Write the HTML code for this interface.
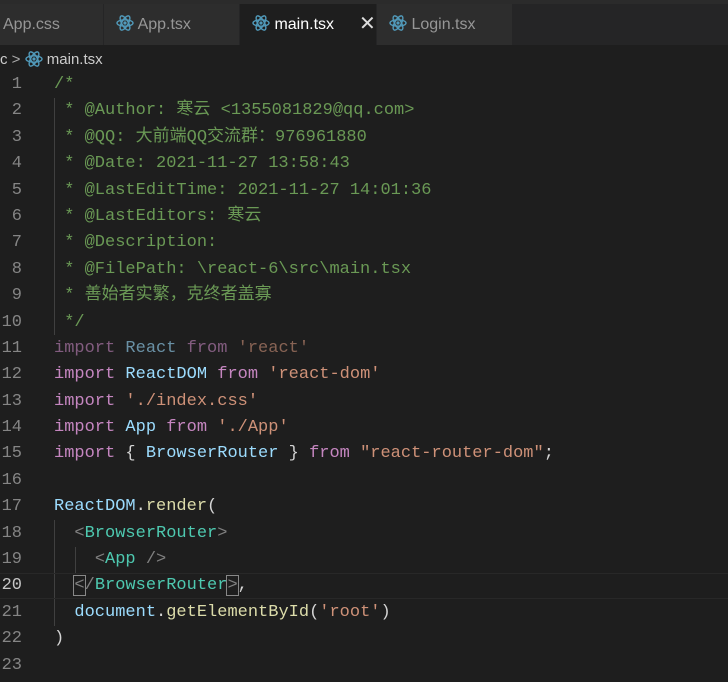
<!DOCTYPE html>
<html><head><meta charset="utf-8"><style>
body{margin:0;width:728px;height:682px;background:#1e1e1e;overflow:hidden;font-family:"Liberation Sans","Noto Sans CJK SC",sans-serif;position:relative}
.top{position:absolute;left:0;top:0;width:728px;height:4px;background:#2b2b2b}
.tabs{position:absolute;left:0;top:4px;width:728px;height:41px;background:#252526}
.tab{position:absolute;top:0;height:41px;background:#2d2d2d;color:#969696;font-size:16px;line-height:41px;border-right:1px solid #252526;box-sizing:border-box}
.tab.act{background:#1e1e1e;color:#fff}
.ic{display:inline-block;vertical-align:middle;margin-top:-3px}
.bc{position:absolute;top:47px;left:0;height:25px;line-height:25px;color:#cccccc;font-size:15px}
.code{position:absolute;top:72px;left:0;font-family:"Liberation Mono","Noto Sans CJK SC",monospace;font-size:17px}
.l{height:26.4px;line-height:26.4px;white-space:pre;position:relative}
.n{display:inline-block;width:22px;text-align:right;color:#858585;margin-right:32px}
.c{color:#6a9955}.k{color:#c586c0}.v{color:#9cdcfe}.s{color:#ce9178}.f{color:#dcdcaa}.t{color:#4ec9b0}.p{color:#808080}.w{color:#d4d4d4}
.g{position:absolute;width:1px;background:#404040}
</style></head><body>
<svg width="0" height="0" style="position:absolute"><defs><g id="r"><ellipse cx="9" cy="9" rx="8" ry="3.2" fill="none" stroke="#519aba" stroke-width="1.4"/><ellipse cx="9" cy="9" rx="8" ry="3.2" fill="none" stroke="#519aba" stroke-width="1.4" transform="rotate(60 9 9)"/><ellipse cx="9" cy="9" rx="8" ry="3.2" fill="none" stroke="#519aba" stroke-width="1.4" transform="rotate(120 9 9)"/><circle cx="9" cy="9" r="1.6" fill="#519aba"/></g></defs></svg>
<div class="top"></div>
<div class="tabs">
<div class="tab" style="left:0;width:104px;padding-left:3px">App.css</div>
<div class="tab" style="left:104px;width:136px;padding-left:12px"><svg class="ic" width="18" height="18"><use href="#r"/></svg> App.tsx</div>
<div class="tab act" style="left:240px;width:137px;padding-left:12px"><svg class="ic" width="18" height="18"><use href="#r"/></svg> main.tsx<span style="position:absolute;left:119px;top:0;font-size:20px;color:#ddd">✕</span></div>
<div class="tab" style="left:377px;width:136px;padding-left:12px"><svg class="ic" width="18" height="18"><use href="#r"/></svg> Login.tsx</div>
</div>
<div class="bc">c <span style="color:#aaa">&gt;</span> <svg class="ic" width="18" height="18"><use href="#r"/></svg> main.tsx</div>
<div class="g" style="left:54px;top:98px;height:237px"></div>
<div class="g" style="left:54px;top:520px;height:106px"></div>
<div class="g" style="left:75px;top:547px;height:26px"></div>
<div style="position:absolute;left:0;top:573px;width:728px;height:26px;border-top:1px solid #282828;border-bottom:1px solid #282828;box-sizing:border-box"></div>
<div class="code">
<div class="l"><span class="n">1</span><span class="c">/*</span></div>
<div class="l"><span class="n">2</span><span class="c"> * @Author: 寒云 &lt;1355081829@qq.com&gt;</span></div>
<div class="l"><span class="n">3</span><span class="c"> * @QQ: 大前端QQ交流群：976961880</span></div>
<div class="l"><span class="n">4</span><span class="c"> * @Date: 2021-11-27 13:58:43</span></div>
<div class="l"><span class="n">5</span><span class="c"> * @LastEditTime: 2021-11-27 14:01:36</span></div>
<div class="l"><span class="n">6</span><span class="c"> * @LastEditors: 寒云</span></div>
<div class="l"><span class="n">7</span><span class="c"> * @Description:</span></div>
<div class="l"><span class="n">8</span><span class="c"> * @FilePath: \react-6\src\main.tsx</span></div>
<div class="l"><span class="n">9</span><span class="c"> * 善始者实繁，克终者盖寡</span></div>
<div class="l"><span class="n">10</span><span class="c"> */</span></div>
<div class="l"><span class="n">11</span><span style="opacity:.6"><span class="k">import</span> <span class="v">React</span> <span class="k">from</span> <span class="s">'react'</span></span></div>
<div class="l"><span class="n">12</span><span class="k">import</span> <span class="v">ReactDOM</span> <span class="k">from</span> <span class="s">'react-dom'</span></div>
<div class="l"><span class="n">13</span><span class="k">import</span> <span class="s">'./index.css'</span></div>
<div class="l"><span class="n">14</span><span class="k">import</span> <span class="v">App</span> <span class="k">from</span> <span class="s">'./App'</span></div>
<div class="l"><span class="n">15</span><span class="k">import</span> <span class="w">{</span> <span class="v">BrowserRouter</span> <span class="w">}</span> <span class="k">from</span> <span class="s">"react-router-dom"</span><span class="w">;</span></div>
<div class="l"><span class="n">16</span></div>
<div class="l"><span class="n">17</span><span class="v">ReactDOM</span><span class="w">.</span><span class="f">render</span><span class="w">(</span></div>
<div class="l"><span class="n">18</span>  <span class="p">&lt;</span><span class="t">BrowserRouter</span><span class="p">&gt;</span></div>
<div class="l"><span class="n">19</span>    <span class="p">&lt;</span><span class="t">App</span> <span class="p">/&gt;</span></div>
<div class="l"><span class="n" style="color:#c6c6c6">20</span>  <span class="p" style="outline:1px solid #888">&lt;</span><span class="p">/</span><span class="t">BrowserRouter</span><span class="p" style="outline:1px solid #888">&gt;</span><span class="w">,</span></div>
<div class="l"><span class="n">21</span>  <span class="v">document</span><span class="w">.</span><span class="f">getElementById</span><span class="w">(</span><span class="s">'root'</span><span class="w">)</span></div>
<div class="l"><span class="n">22</span><span class="w">)</span></div>
<div class="l"><span class="n">23</span></div>
</div>
</body></html>
